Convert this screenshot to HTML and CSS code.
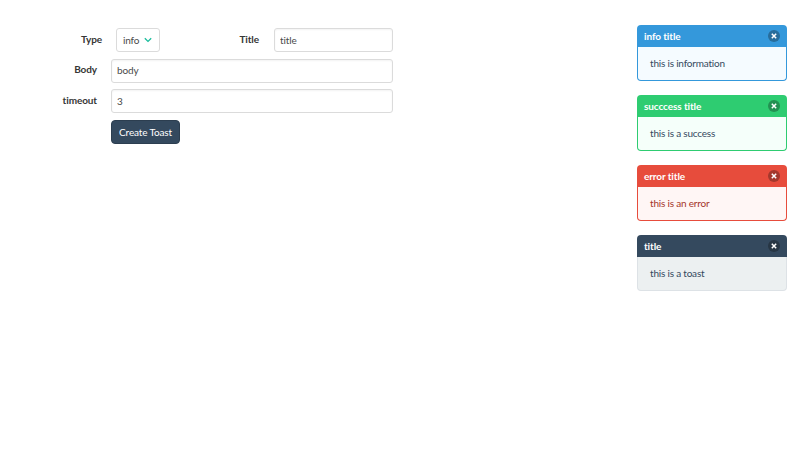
FILE: index.html
```html
<!DOCTYPE html>
<html lang="en">
<head>
    <meta charset="UTF-8">
    <meta name="viewport" content="width=device-width, initial-scale=1.0">
    <title>Toast Demo</title>
    <link rel="stylesheet" href="styles.css">
</head>
<body>
    <!-- form for creating a toast -->
    <form class="toastForm">
        <div class="row">
            <label class="label labelType">Type</label>
            <div class="selectBox">
                <span>info</span>
                <svg class="chevron" width="8" height="6" viewBox="0 0 8 6"><path d="M0.8 1.2 L4 4.4 L7.2 1.2" fill="none" stroke="#1abc9c" stroke-width="1.3"/></svg>
            </div>
            <label class="label labelTitle">Title</label>
            <input class="input inputTitle" type="text" value="title">
        </div>
        <div class="row">
            <label class="label">Body</label>
            <input class="input inputWide" type="text" value="body">
        </div>
        <div class="row">
            <label class="label">timeout</label>
            <input class="input inputWide" type="text" value="3">
        </div>
        <div class="row">
            <span class="label"></span>
            <button class="button" type="button">Create Toast</button>
        </div>
    </form>

    <!-- the toasts on the right -->
    <section class="toastList">
        <div class="toast info">
            <div class="toastHeader">
                <span>info title</span>
                <span class="close"><svg width="6" height="6" viewBox="0 0 6 6"><path d="M0.8 0.8 L5.2 5.2 M5.2 0.8 L0.8 5.2" stroke="white" stroke-width="1.5"/></svg></span>
            </div>
            <div class="toastBody">this is information</div>
        </div>
        <div class="toast success">
            <div class="toastHeader">
                <span>succcess title</span>
                <span class="close"><svg width="6" height="6" viewBox="0 0 6 6"><path d="M0.8 0.8 L5.2 5.2 M5.2 0.8 L0.8 5.2" stroke="white" stroke-width="1.5"/></svg></span>
            </div>
            <div class="toastBody">this is a success</div>
        </div>
        <div class="toast error">
            <div class="toastHeader">
                <span>error title</span>
                <span class="close"><svg width="6" height="6" viewBox="0 0 6 6"><path d="M0.8 0.8 L5.2 5.2 M5.2 0.8 L0.8 5.2" stroke="white" stroke-width="1.5"/></svg></span>
            </div>
            <div class="toastBody">this is an error</div>
        </div>
        <div class="toast plain">
            <div class="toastHeader">
                <span>title</span>
                <span class="close"><svg width="6" height="6" viewBox="0 0 6 6"><path d="M0.8 0.8 L5.2 5.2 M5.2 0.8 L0.8 5.2" stroke="white" stroke-width="1.5"/></svg></span>
            </div>
            <div class="toastBody">this is a toast</div>
        </div>
    </section>
</body>
</html>
```

FILE: styles.css
```css
* {
    padding: 0px;
    margin: 0px;
    box-sizing: border-box;
}
body {
    background-color: white;
    color: #363636;
    font-family: Lato, "Open Sans", sans-serif;
    font-size: 10px;
    letter-spacing: -0.1px;
    height: 450px;
    overflow: hidden;
    display: flex;
    justify-content: space-between;
    align-items: flex-start;
}

/* form */
.toastForm {
    display: flex;
    flex-direction: column;
    gap: 6.5px;
    padding-top: 28px;
    width: 393px;
}
.row {
    display: flex;
    align-items: center;
}
.label {
    width: 97px;
    margin-right: 14px;
    text-align: right;
    font-weight: 700;
    line-height: 20px;
    margin-top: -3px;
}
.labelType {
    width: 102px;
}
.labelTitle {
    width: 59px;
    margin-left: 40px;
    margin-right: 15px;
}
.selectBox {
    display: flex;
    align-items: center;
    gap: 5px;
    width: 44px;
    height: 24px;
    padding-left: 6px;
    border: 1px solid #dbdbdb;
    border-radius: 3px;
    color: #4a4a4a;
    letter-spacing: -0.2px;
}
.chevron {
    display: block;
}
.input {
    height: 24px;
    padding: 0 5px 1px;
    border: 1px solid #dbdbdb;
    border-radius: 3px;
    color: #4a4a4a;
    font-family: inherit;
    font-size: 10px;
    letter-spacing: -0.1px;
    box-shadow: inset 0 1px 2px rgba(10, 10, 10, 0.05);
}
.inputTitle {
    width: 119px;
}
.inputWide {
    flex: 1;
}
.button {
    width: 69px;
    height: 24px;
    background-color: #34495e;
    color: white;
    border: 1px solid #2c3e50;
    border-radius: 4px;
    font-family: inherit;
    font-size: 10px;
    letter-spacing: -0.15px;
}

/* toasts */
.toastList {
    display: flex;
    flex-direction: column;
    gap: 14px;
    width: 150px;
    margin: 25px 13px 0 0;
}
.toast {
    height: 56px;
    display: flex;
    flex-direction: column;
}
.toastHeader {
    display: flex;
    justify-content: space-between;
    align-items: center;
    height: 22px;
    padding: 0 7px;
    color: white;
    font-weight: 700;
    border-radius: 4px 4px 0 0;
}
.close {
    display: flex;
    align-items: center;
    justify-content: center;
    width: 12px;
    height: 12px;
    border-radius: 50%;
    background-color: rgba(10, 10, 10, 0.3);
}
.toastBody {
    flex: 1;
    padding: 9px 12px;
    letter-spacing: -0.2px;
    line-height: 15px;
    border: 1.5px solid;
    border-top: 0;
    border-radius: 0 0 4px 4px;
}
.info .toastHeader {
    background-color: #3498db;
}
.info .toastBody {
    border-color: #3498db;
    background-color: #f5fbff;
    color: #34495e;
}
.success .toastHeader {
    background-color: #2ecc71;
}
.success .toastBody {
    border-color: #2ecc71;
    background-color: #f5fffa;
    color: #34495e;
}
.error .toastHeader {
    background-color: #e74c3c;
}
.error .toastBody {
    border-color: #e74c3c;
    background-color: #fff6f5;
    color: #a5352a;
}
.plain .toastHeader {
    background-color: #34495e;
}
.plain .toastBody {
    border-color: #dde2e6;
    background-color: #ecf0f1;
    color: #34495e;
}
```
